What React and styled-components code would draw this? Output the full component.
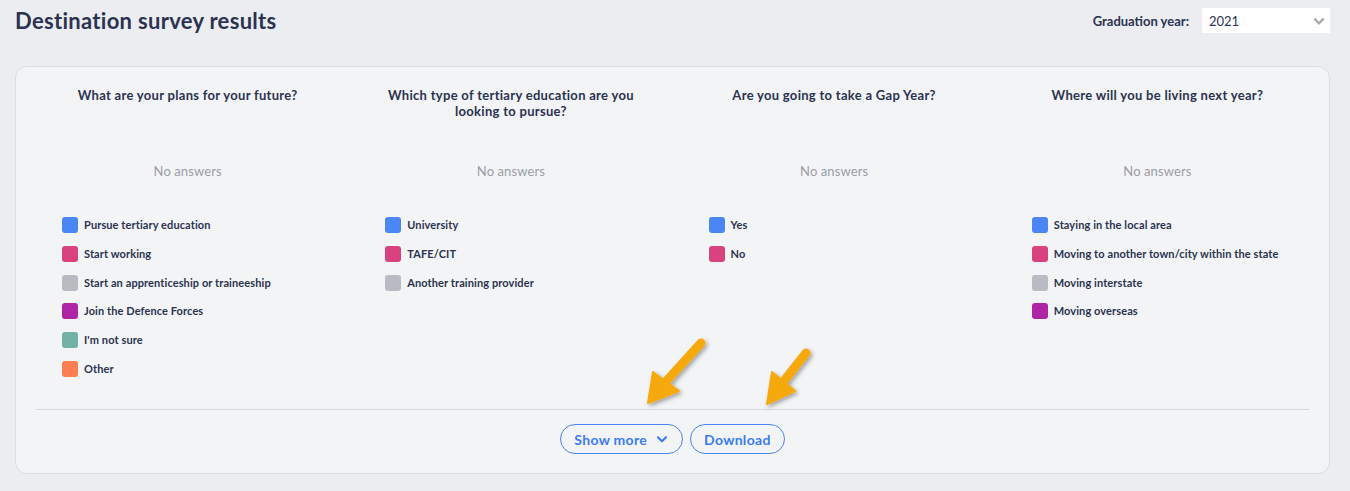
import React from "react";
import styled, { createGlobalStyle } from "styled-components";

const GlobalStyle = createGlobalStyle`
  body {
    margin: 0;
    background: #ecedf0;
    font-family: Lato, "Open Sans", Arial, sans-serif;
    color: #2b3350;
  }
`;

const Page = styled.div`
  position: relative;
  padding: 8px 20px 16px 15px;
`;

const Header = styled.div`
  display: flex;
  justify-content: space-between;
  align-items: flex-start;
  height: 58px;
`;

const Title = styled.h1`
  margin: 0;
  font-size: 22px;
  font-weight: 700;
  letter-spacing: 0.3px;
  line-height: 26px;
  color: #2b3350;
`;

const YearPicker = styled.div`
  display: flex;
  align-items: center;
  gap: 13px;
`;

const YearLabel = styled.span`
  font-size: 13px;
  font-weight: 700;
`;

const Select = styled.div`
  width: 128px;
  height: 25px;
  background: #fff;
  display: flex;
  align-items: center;
  justify-content: space-between;
  padding: 0 4px 0 7px;
  box-sizing: border-box;
  font-size: 13px;
`;

const Card = styled.div`
  background: #f3f4f6;
  border: 1px solid #dcdde1;
  border-radius: 12px;
  padding: 0 10px;
`;

const Columns = styled.div`
  display: grid;
  grid-template-columns: repeat(4, 1fr);
  height: 342px;
`;

const Column = styled.div`
  display: flex;
  flex-direction: column;
  padding-top: 20px;
`;

const Question = styled.div`
  font-size: 13px;
  font-weight: 700;
  letter-spacing: 0.3px;
  line-height: 16px;
  text-align: center;
  max-width: 250px;
  margin: 0 auto;
  height: 64px;
`;

const Empty = styled.div`
  text-align: center;
  font-size: 13px;
  letter-spacing: 0.1px;
  color: #9a9ca6;
  height: 66px;
  line-height: 40px;
`;

const Legend = styled.ul`
  list-style: none;
  margin: 0;
  padding: 0 0 0 36px;
  display: flex;
  flex-direction: column;
  gap: 12.8px;
`;

const LegendItem = styled.li`
  display: flex;
  align-items: center;
  gap: 6px;
  font-size: 11px;
  font-weight: 700;
  letter-spacing: 0.1px;
  line-height: 16px;
`;

const Swatch = styled.span`
  width: 16px;
  height: 16px;
  border-radius: 3px;
  background: ${(p) => p.color};
`;

const Footer = styled.div`
  border-top: 1px solid #d7d8dc;
  margin: 0 10px;
  height: 64px;
  display: flex;
  justify-content: center;
  align-items: flex-start;
  gap: 7px;
  padding-top: 14px;
  box-sizing: border-box;
`;

const PillButton = styled.button`
  height: 30px;
  border: 1px solid #4a84f5;
  border-radius: 15px;
  background: transparent;
  color: #3b7cf1;
  font-family: inherit;
  font-size: 14px;
  font-weight: 700;
  letter-spacing: 0.3px;
  padding: 0 13px;
  display: flex;
  align-items: center;
  gap: 8px;
  cursor: pointer;
`;

const Arrows = styled.svg`
  position: absolute;
  left: 0;
  top: 0;
  pointer-events: none;
`;

const colors = {
  blue: "#4a86f4",
  pink: "#d7427f",
  grey: "#b9bbc2",
  purple: "#ae26a6",
  teal: "#73b1a6",
  orange: "#fb7e51",
};

const surveys = [
  {
    q: "What are your plans for your future?",
    items: [
      ["Pursue tertiary education", colors.blue],
      ["Start working", colors.pink],
      ["Start an apprenticeship or traineeship", colors.grey],
      ["Join the Defence Forces", colors.purple],
      ["I'm not sure", colors.teal],
      ["Other", colors.orange],
    ],
  },
  {
    q: "Which type of tertiary education are you looking to pursue?",
    items: [
      ["University", colors.blue],
      ["TAFE/CIT", colors.pink],
      ["Another training provider", colors.grey],
    ],
  },
  {
    q: "Are you going to take a Gap Year?",
    items: [
      ["Yes", colors.blue],
      ["No", colors.pink],
    ],
  },
  {
    q: "Where will you be living next year?",
    items: [
      ["Staying in the local area", colors.blue],
      ["Moving to another town/city within the state", colors.pink],
      ["Moving interstate", colors.grey],
      ["Moving overseas", colors.purple],
    ],
  },
];

const Arrow = ({ tail, tip, w1, w2 }) => (
  <g>
    <line
      x1={tail[0]}
      y1={tail[1]}
      x2={(w1[0] + w2[0]) / 2}
      y2={(w1[1] + w2[1]) / 2}
      stroke="#f6a910"
      strokeWidth="9"
      strokeLinecap="round"
    />
    <polygon
      points={`${tip[0]},${tip[1]} ${w1[0]},${w1[1]} ${w2[0]},${w2[1]}`}
      fill="#f6a910"
      stroke="#f6a910"
      strokeWidth="2"
      strokeLinejoin="round"
    />
  </g>
);

export default function App() {
  return (
    <Page>
      <GlobalStyle />
      <Header>
        <Title>Destination survey results</Title>
        <YearPicker>
          <YearLabel>Graduation year:</YearLabel>
          <Select>
            2021
            <svg width="14" height="14" viewBox="0 0 24 24" fill="none" stroke="#a7a9ae" strokeWidth="4">
              <path d="M4 8l8 8 8-8" />
            </svg>
          </Select>
        </YearPicker>
      </Header>
      <Card>
        <Columns>
          {surveys.map((s) => (
            <Column key={s.q}>
              <Question>{s.q}</Question>
              <Empty>No answers</Empty>
              <Legend>
                {s.items.map(([label, color]) => (
                  <LegendItem key={label}>
                    <Swatch color={color} />
                    {label}
                  </LegendItem>
                ))}
              </Legend>
            </Column>
          ))}
        </Columns>
        <Footer>
          <PillButton>
            Show more
            <svg width="14" height="14" viewBox="0 0 24 24" fill="none" stroke="#3b7cf1" strokeWidth="3.5" strokeLinecap="round" strokeLinejoin="round">
              <path d="M5 9l7 7 7-7" />
            </svg>
          </PillButton>
          <PillButton>Download</PillButton>
        </Footer>
      </Card>
      <Arrows width="1350" height="491">
        <defs>
          <filter id="sh" x="-20%" y="-20%" width="140%" height="140%">
            <feDropShadow dx="2" dy="2" stdDeviation="2" floodColor="#000" floodOpacity="0.35" />
          </filter>
        </defs>
        <g filter="url(#sh)">
          <Arrow tail={[701, 343]} tip={[648, 403]} w1={[653, 372]} w2={[679, 391]} />
          <Arrow tail={[806, 353]} tip={[767, 404]} w1={[772, 372]} w2={[795, 391]} />
        </g>
      </Arrows>
    </Page>
  );
}
